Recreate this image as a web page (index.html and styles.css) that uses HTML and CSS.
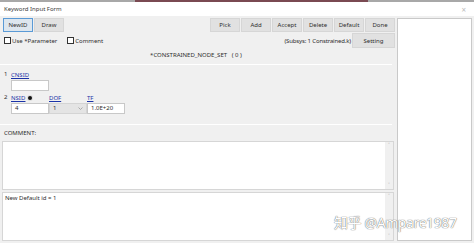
FILE: index.html
```html
<!DOCTYPE html>
<html>
<head>
  <meta charset="UTF-8">
  <link rel="stylesheet" href="styles.css">
</head>
<body>
  <div id="strip"><span id="strip-red"></span></div>
  <div id="titlebar">
    <span>Keyword Input Form</span>
    <span id="close">×</span>
  </div>
  <div id="main">
    <div id="left">
      <div id="toolbar">
        <button class="btn focus">NewID</button>
        <button class="btn">Draw</button>
        <div class="spacer"></div>
        <button class="btn">Pick</button>
        <button class="btn">Add</button>
        <button class="btn">Accept</button>
        <button class="btn">Delete</button>
        <button class="btn">Default</button>
        <button class="btn">Done</button>
      </div>
      <div id="opts">
        <label class="chk"><span class="box"></span>Use *Parameter</label>
        <label class="chk"><span class="box"></span>Comment</label>
        <div class="spacer"></div>
        <span id="subsys">(Subsys: 1 Constrained.k)</span>
        <button class="btn setting">Setting</button>
      </div>
      <div id="kw">*CONSTRAINED_NODE_SET&nbsp;&nbsp;&nbsp;( 0 )</div>
      <div class="sep"></div>
      <div id="card">
        <div class="row">
          <span class="num">1</span>
          <div class="field">
            <a class="lbl">CNSID</a>
            <div class="input"></div>
          </div>
        </div>
        <div class="row">
          <span class="num">2</span>
          <div class="field">
            <span class="lbl"><a>NSID</a><span class="dot"></span></span>
            <div class="input">4</div>
          </div>
          <div class="field">
            <a class="lbl">DOF</a>
            <div class="input select">1
              <svg width="5" height="3" viewBox="0 0 5 3"><path d="M0.5 0.5 L2.5 2.5 L4.5 0.5" fill="none" stroke="#9a9a9a" stroke-width="0.8"/></svg>
            </div>
          </div>
          <div class="field">
            <a class="lbl">TF</a>
            <div class="input">1.0E+20</div>
          </div>
        </div>
      </div>
      <div class="sep"></div>
      <div id="comment-label">COMMENT:</div>
      <div class="textbox" id="comment"><div class="scroll"><span>˄</span><span>˅</span></div></div>
      <div class="textbox" id="log"><div class="text">New Default id = 1</div><div class="scroll"><span>˄</span><span>˅</span></div></div>
    </div>
    <div id="side"></div>
  </div>
  <div id="watermark">知乎 @Ampare1987</div>
</body>
</html>
```

FILE: styles.css
```css
* { box-sizing: border-box; margin: 0; padding: 0; }
body {
  width: 474px;
  height: 243px;
  overflow: hidden;
  font-family: "Noto Sans", "Noto Sans CJK SC", sans-serif;
  font-size: 6px;
  color: #2e2e2e;
  background: #f0f0f0;
  position: relative;
}
#strip {
  height: 2px;
  background: #a8a8a8;
  display: flex;
}
#strip-red {
  margin-left: 135px;
  width: 233px;
  background: #7a4a52;
}
#titlebar {
  height: 14px;
  background: #fff;
  display: flex;
  justify-content: space-between;
  align-items: center;
  padding: 0 8px 0 4px;
  color: #3a3a3a;
}
#close {
  color: #bbb;
  font-size: 8px;
}
#main {
  display: flex;
  height: 227px;
}
#left {
  width: 396px;
  display: flex;
  flex-direction: column;
}
.spacer { flex: 1; }

.btn {
  font-family: inherit;
  font-size: 6px;
  color: #2e2e2e;
  background: #e1e1e1;
  border: 1px solid #d6d6d6;
  height: 14px;
  width: 30px;
}
.btn.focus {
  background: #dde6ee;
  border: 1px solid #5a9ad6;
}
#toolbar {
  display: flex;
  gap: 1px;
  padding: 2px 1px 0 3px;
}
#opts {
  display: flex;
  align-items: center;
  height: 15px;
  margin-top: 1px;
  padding: 0 1px 0 4px;
}
.chk {
  display: flex;
  align-items: center;
  gap: 1px;
  margin-right: 10px;
}
.box {
  width: 7px;
  height: 7px;
  border: 1px solid #333;
  background: #fff;
}
#subsys {
  margin-right: 1px;
  align-self: flex-start;
  margin-top: 4px;
  letter-spacing: -0.15px;
}
.btn.setting {
  width: 43px;
  height: 15px;
}
#kw {
  text-align: center;
  height: 14px;
  line-height: 14px;
  padding-right: 4px;
}
.sep {
  height: 1px;
  margin: 2px 4px 0 0;
  background: #cfcfcf;
  border-bottom: 1px solid #fff;
}
#card {
  display: flex;
  flex-direction: column;
  gap: 2px;
  padding: 5px 0 10px 4px;
  height: 57px;
}
.row {
  display: flex;
  align-items: flex-start;
}
.num {
  width: 7px;
  height: 9px;
  line-height: 9px;
}
.field {
  display: flex;
  flex-direction: column;
  gap: 1px;
}
.lbl {
  display: flex;
  align-items: center;
  gap: 3px;
  height: 9px;
  color: #1b33a8;
  text-decoration: underline;
}
.lbl a { color: #1b33a8; text-decoration: underline; }
.dot {
  width: 4px;
  height: 4px;
  border-radius: 50%;
  background: #111;
  box-shadow: 0 0 0 1px #ddd;
}
.input {
  width: 38px;
  height: 11px;
  background: #fff;
  border: 1px solid #c8c8c8;
  padding-left: 3px;
  line-height: 9px;
  display: flex;
  align-items: center;
}
.input.select {
  background: #e4e4e4;
  border-color: #d4d4d4;
  justify-content: space-between;
  padding-right: 3px;
}
#comment-label {
  height: 15px;
  line-height: 15px;
  padding-left: 4px;
  margin-top: 1px;
}
.textbox {
  background: #fff;
  border: 1px solid #d6d6d6;
  margin: 0 2px 0 2px;
  display: flex;
  position: relative;
}
#comment { height: 49px; }
#log {
  height: 49px;
  margin-top: 2px;
}
.textbox .text {
  flex: 1;
  padding: 1px 0 0 2px;
}
.scroll {
  margin-left: auto;
  width: 8px;
  background: #f0f0f0;
  display: flex;
  flex-direction: column;
  justify-content: space-between;
  align-items: center;
  color: #a0a0a0;
  font-size: 5px;
  line-height: 7px;
}
#side {
  width: 75px;
  height: 223px;
  margin-top: 2px;
  margin-left: 1px;
  background: #fff;
  border: 1px solid #c9c9c9;
}
#watermark {
  position: absolute;
  left: 334px;
  top: 212px;
  font-size: 14px;
  color: #fff;
  letter-spacing: -0.4px;
  text-shadow: 0 0 1px #666, 0 0 1px #888;
}
```
